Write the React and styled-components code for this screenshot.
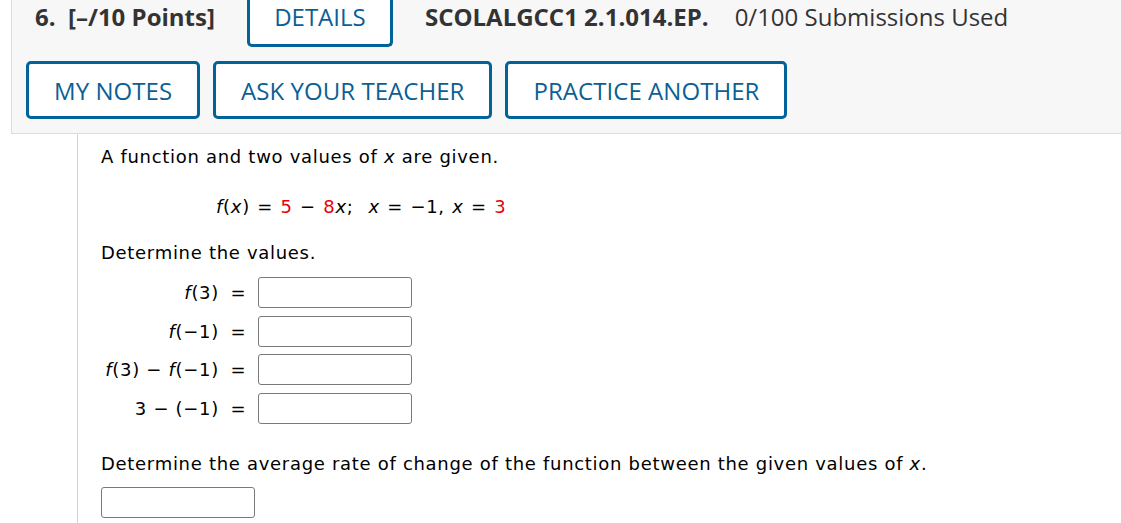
import React from "react";
import styled, { createGlobalStyle } from "styled-components";

const GlobalStyle = createGlobalStyle`
  html, body {
    margin: 0;
    padding: 0;
    background: #fff;
    overflow: hidden;
  }
`;

const rows = [
  { label: <><I>f</I>(3)</> },
  { label: <><I>f</I>(−1)</> },
  { label: <><I>f</I>(3) − <I>f</I>(−1)</> },
  { label: <>3 − (−1)</> },
];

function I({ children }) {
  return <Italic>{children}</Italic>;
}

function App() {
  return (
    <Page>
      <GlobalStyle />
      <Header>
        <TopRow>
          <Points>6.&nbsp; [–/10 Points]</Points>
          <DetailsTab>DETAILS</DetailsTab>
          <Code>SCOLALGCC1 2.1.014.EP.</Code>
          <Used>0/100 Submissions Used</Used>
        </TopRow>
        <ButtonRow>
          <ActionButton>MY NOTES</ActionButton>
          <ActionButton>ASK YOUR TEACHER</ActionButton>
          <ActionButton>PRACTICE ANOTHER</ActionButton>
        </ButtonRow>
      </Header>
      <Content>
        <Text>
          A function and two values of <Italic>x</Italic> are given.
        </Text>
        <Formula>
          <Italic>f</Italic>(<Italic>x</Italic>) = <Red>5</Red> − <Red>8</Red>
          <Italic>x</Italic>;&nbsp; <Italic>x</Italic> = −1, <Italic>x</Italic> ={" "}
          <Red>3</Red>
        </Formula>
        <Text>Determine the values.</Text>
        <ValueGrid>
          {rows.map((r, i) => (
            <React.Fragment key={i}>
              <Label>{r.label}</Label>
              <Equals>=</Equals>
              <AnswerBox />
            </React.Fragment>
          ))}
        </ValueGrid>
        <Question>
          Determine the average rate of change of the function between the given
          values of <Italic>x</Italic>.
        </Question>
        <AnswerBox />
      </Content>
    </Page>
  );
}

const Page = styled.div`
  width: 1121px;
  height: 523px;
  overflow: hidden;
`;

const Header = styled.div`
  margin-left: 11px;
  width: 1130px;
  background: #f7f7f7;
  border: 1px solid #dcdcdc;
  border-top: none;
  box-sizing: border-box;
  padding-bottom: 14px;
  font-family: "Open Sans", "Liberation Sans", sans-serif;
`;

const TopRow = styled.div`
  display: flex;
  align-items: flex-start;
  padding-left: 23px;
  height: 47px;
  font-size: 24px;
  color: #333;
`;

const Points = styled.div`
  font-weight: 700;
  line-height: 34px;
  margin-right: 32px;
`;

const DetailsTab = styled.div`
  box-sizing: border-box;
  width: 146px;
  height: 47px;
  line-height: 34px;
  text-align: center;
  color: #0b5f95;
  border: 3px solid #00639a;
  border-top: none;
  border-radius: 0 0 5px 5px;
  background: #fff;
  margin-right: 32px;
`;

const Code = styled.div`
  font-weight: 700;
  line-height: 34px;
  margin-right: 26px;
`;

const Used = styled.div`
  line-height: 34px;
`;

const ButtonRow = styled.div`
  display: flex;
  gap: 13px;
  padding-left: 14px;
  margin-top: 14px;
`;

const ActionButton = styled.button`
  box-sizing: border-box;
  height: 58px;
  padding: 0 25px;
  background: #fff;
  border: 3px solid #00639a;
  border-radius: 5px;
  color: #0b5f95;
  font-family: "Open Sans", "Liberation Sans", sans-serif;
  font-size: 24px;
  letter-spacing: 0.05px;
`;

const Content = styled.div`
  margin-left: 77px;
  border-left: 1px solid #d4d4d4;
  padding: 12px 0 0 23px;
  height: 400px;
  font-family: "DejaVu Sans", Verdana, sans-serif;
  font-size: 18px;
  letter-spacing: 0.7px;
  color: #000;
`;

const Italic = styled.i`
  font-style: italic;
`;

const Red = styled.span`
  color: #e8000b;
`;

const Text = styled.p`
  margin: 0;
  line-height: 22px;
`;

const Formula = styled.p`
  margin: 28px 0 24px 115px;
  line-height: 22px;
  word-spacing: 1px;
`;

const ValueGrid = styled.div`
  display: grid;
  grid-template-columns: 118px auto auto;
  justify-content: start;
  align-items: center;
  column-gap: 11.5px;
  row-gap: 7.5px;
  margin-top: 13px;
`;

const Label = styled.div`
  text-align: right;
  white-space: nowrap;
`;

const Equals = styled.div``;

const AnswerBox = styled.div`
  box-sizing: border-box;
  width: 154px;
  height: 31px;
  border: 1px solid #7a7a7a;
  border-radius: 3px;
  background: #fff;
`;

const Question = styled.p`
  margin: 29px 0 12px;
  line-height: 22px;
`;

export default App;
